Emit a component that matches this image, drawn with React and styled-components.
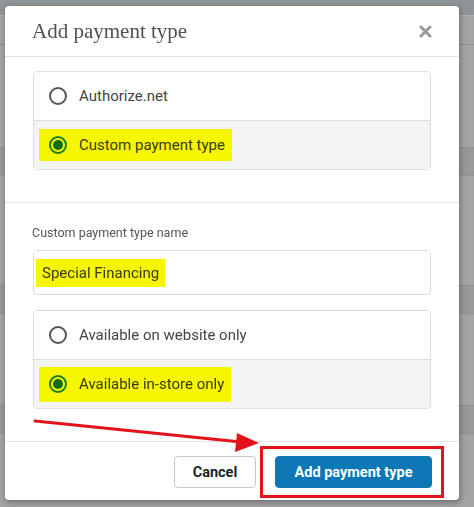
import React from 'react';
import styled, { createGlobalStyle } from 'styled-components';

const GlobalStyle = createGlobalStyle`
  html, body {
    margin: 0;
    padding: 0;
    height: 100%;
    overflow: hidden;
  }
  body {
    font-family: Roboto, "Liberation Sans", Arial, sans-serif;
    background: #a3a3a3;
  }
`;

// dimmed page behind the dialog
const Page = styled.div`
  display: flex;
  flex-direction: column;
  height: 507px;
`;

const TopBar = styled.div`
  height: 15px;
  background: #8f9497;
  border-bottom: 1px solid #b0b0b0;
`;

const BgRow = styled.div`
  height: ${p => p.h}px;
  background: ${p => (p.dark ? '#999999' : '#a4a4a4')};
  border-bottom: 1px solid #929292;
`;

const Backdrop = styled.div`
  position: fixed;
  inset: 0;
  padding: 6px 15px 7px 5px;
  display: flex;
  align-items: flex-start;
`;

const Modal = styled.div`
  position: relative;
  width: 454px;
  height: 494px;
  background: #fff;
  border-radius: 4px;
  box-shadow: 1px 2px 6px rgba(0, 0, 0, 0.35);
  display: flex;
  flex-direction: column;
`;

const Header = styled.div`
  height: 50px;
  padding: 0 27px;
  display: flex;
  align-items: center;
  justify-content: space-between;
  border-bottom: 1px solid #e6e6e6;
`;

const Title = styled.h2`
  margin: 0;
  font-family: "Liberation Serif", "DejaVu Serif", serif;
  font-weight: 400;
  font-size: 21px;
  color: #505050;
`;

const Close = styled.button`
  border: 0;
  background: none;
  padding: 0;
  width: 14px;
  height: 14px;
  display: flex;
  align-items: center;
  justify-content: center;
  cursor: pointer;
`;

const Section = styled.div`
  padding: ${p => p.pad};
  border-bottom: ${p => (p.divider ? '1px solid #e6e6e6' : 'none')};
`;

const Group = styled.div`
  border: 1px solid #dedede;
  border-radius: 4px;
  overflow: hidden;
`;

const Row = styled.div`
  height: 48px;
  padding-left: 5px;
  display: flex;
  align-items: center;
  background: ${p => (p.selected ? '#f4f4f4' : '#fff')};
  & + & {
    border-top: 1px solid #dedede;
  }
`;

const Mark = styled.span`
  display: inline-flex;
  align-items: center;
  gap: 12px;
  height: ${p => (p.tall ? 35 : 32)}px;
  padding: 0 7px 0 10px;
  background: ${p => (p.on ? '#f6f600' : 'transparent')};
  font-size: 15px;
  color: ${p => (p.on ? '#3b3a06' : '#454545')};
`;

const RadioCircle = styled.span`
  width: 18px;
  height: 18px;
  box-sizing: border-box;
  border-radius: 50%;
  border: 2px solid ${p => (p.checked ? '#1b7d1b' : '#555')};
  display: flex;
  align-items: center;
  justify-content: center;
  &::after {
    content: '';
    width: 10px;
    height: 10px;
    border-radius: 50%;
    background: ${p => (p.checked ? '#0b6c10' : 'transparent')};
  }
`;

const Label = styled.div`
  font-size: 12.5px;
  color: #555;
  margin: 0 0 9px -1px;
  line-height: 16px;
`;

const InputBox = styled.div`
  height: 43px;
  border: 1px solid #dedede;
  border-radius: 4px;
  padding-left: 2px;
  display: flex;
  align-items: center;
  margin-bottom: 15px;
`;

const InputMark = styled.span`
  display: inline-flex;
  align-items: center;
  height: 28px;
  padding: 0 6px;
  background: #f6f600;
  font-size: 15px;
  color: #3b3a06;
`;

const Footer = styled.div`
  flex: 1;
  display: flex;
  justify-content: flex-end;
  align-items: flex-start;
  gap: 19px;
  padding: 14px 27px 0;
`;

const Button = styled.button`
  height: 32px;
  padding: 0;
  border-radius: 4px;
  border: 1px solid ${p => (p.primary ? '#0b78b5' : '#c8c8c8')};
  background: ${p => (p.primary ? '#0b78b5' : '#fff')};
  color: ${p => (p.primary ? '#fff' : '#222')};
  font-family: Roboto, "Liberation Sans", Arial, sans-serif;
  font-weight: 700;
  font-size: 14.5px;
  white-space: nowrap;
  width: ${p => p.w}px;
`;

// annotation layer drawn over the dialog
const RedBox = styled.div`
  position: absolute;
  left: 255px;
  top: 440px;
  width: 178px;
  height: 46px;
  border: 3px solid #e3121b;
`;

const Arrow = styled.svg`
  position: absolute;
  left: 0;
  top: 0;
  pointer-events: none;
`;

function Radio({ checked, label, tall }) {
  return (
    <Row selected={checked}>
      <Mark on={checked} tall={tall}>
        <RadioCircle checked={checked} />
        {label}
      </Mark>
    </Row>
  );
}

export default function App() {
  return (
    <>
      <GlobalStyle />
      <Page>
        <TopBar />
        <BgRow h={28} />
        <BgRow h={102} />
        <BgRow h={27} dark />
        <BgRow h={109} />
        <BgRow h={27} dark />
        <BgRow h={91} />
        <BgRow h={27} dark />
      </Page>
      <Backdrop>
        <Modal>
          <Header>
            <Title>Add payment type</Title>
            <Close aria-label="Close">
              <svg width="13" height="13" viewBox="0 0 13 13">
                <path d="M2 2 L11 11 M11 2 L2 11" stroke="#9a9a9a" strokeWidth="3" strokeLinecap="round" />
              </svg>
            </Close>
          </Header>
          <Section pad="14px 28px 32px" divider>
            <Group>
              <Radio label="Authorize.net" />
              <Radio checked label="Custom payment type" />
            </Group>
          </Section>
          <Section pad="22px 28px 32px" divider>
            <Label>Custom payment type name</Label>
            <InputBox>
              <InputMark>Special Financing</InputMark>
            </InputBox>
            <Group>
              <Radio label="Available on website only" />
              <Radio checked tall label="Available in-store only" />
            </Group>
          </Section>
          <Footer>
            <Button w={82}>Cancel</Button>
            <Button primary w={157}>Add payment type</Button>
          </Footer>
          <RedBox />
          <Arrow width="454" height="494" viewBox="0 0 454 494">
            <path d="M30 415 L236 436" stroke="#e3121b" strokeWidth="3" strokeLinecap="round" />
            <path d="M254 437 L232 427 L230 446 Z" fill="#e3121b" />
          </Arrow>
        </Modal>
      </Backdrop>
    </>
  );
}
